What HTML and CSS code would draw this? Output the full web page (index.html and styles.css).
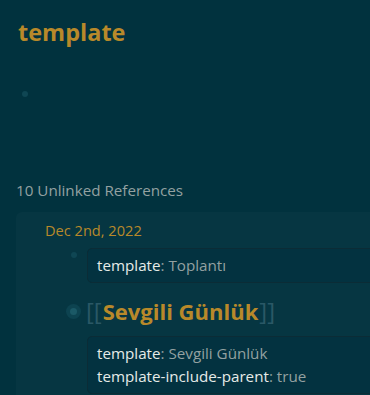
FILE: index.html
```html
<!DOCTYPE html>
<html>
<head>
<meta charset="utf-8">
<link rel="stylesheet" href="styles.css">
</head>
<body>
<div class="page">
  <h1 class="title">template</h1>
  <div class="empty-block"><span class="dot"></span></div>
  <div class="refs-head">10 Unlinked References</div>
  <div class="card">
    <div class="date">Dec 2nd, 2022</div>
    <div class="block">
      <span class="dot small"></span>
      <div class="props">
        <div class="prop"><span class="k">template</span>: <span class="v">Toplantı</span></div>
      </div>
    </div>
    <div class="block page-ref">
      <span class="ring"><span class="dot"></span></span>
      <span class="br">[[</span><span class="ref">Sevgili Günlük</span><span class="br">]]</span>
    </div>
    <div class="block nested">
      <div class="props">
        <div class="prop"><span class="k">template</span>: <span class="v">Sevgili Günlük</span></div>
        <div class="prop"><span class="k">template-include-parent</span>: <span class="v">true</span></div>
      </div>
    </div>
  </div>
</div>
</body>
</html>
```
FILE: styles.css
```css
html, body {
  margin: 0;
  padding: 0;
  background: #01323e;
  overflow: hidden;
}
.page {
  font-family: "Open Sans", "Noto Sans", sans-serif;
  color: #93a1a1;
  padding: 0 0 0 16px;
  height: 395px;
  overflow: hidden;
}
.title {
  margin: 0;
  padding: 17px 0 0 2px;
  font-size: 23.5px;
  font-weight: 700;
  line-height: 30px;
  color: #b8892a;
}
.empty-block {
  height: 26px;
  margin-top: 34px;
  display: flex;
  align-items: center;
  padding-left: 6px;
}
.dot {
  display: block;
  width: 6px;
  height: 6px;
  border-radius: 50%;
  background: #0f4653;
}
.refs-head {
  margin-top: 73px;
  font-size: 15.2px;
  line-height: 20px;
  color: #93a1a1;
}
.card {
  margin-top: 12px;
  background: #063642;
  border-radius: 6px 0 0 0;
  padding: 7px 0 0 29px;
  height: 177px;
  overflow: hidden;
}
.date {
  font-size: 14.6px;
  line-height: 22px;
  color: #b8892a;
}
.block {
  display: flex;
  align-items: flex-start;
  margin-left: 25px;
}
.block .dot.small {
  width: 6px;
  height: 6px;
  margin: 11px 10px 0 1px;
}
.props {
  flex: 1;
  background: #033240;
  border: 1px solid #0b2c36;
  border-radius: 5px;
  padding: 5px 9px;
  margin-top: 7px;
  margin-right: -10px;
}
.prop {
  font-size: 15.2px;
  line-height: 23px;
  white-space: nowrap;
}
.k {
  color: #e6ebe8;
}
.v {
  color: #93a1a1;
}
.page-ref {
  margin-top: 14px;
  align-items: center;
  font-size: 22px;
  line-height: 28px;
  margin-left: 21px;
}
.ring {
  width: 15px;
  height: 15px;
  border-radius: 50%;
  background: #0d4350;
  display: flex;
  align-items: center;
  justify-content: center;
  margin-right: 5px;
}
.ring .dot {
  width: 7px;
  height: 7px;
  background: #1b5966;
}
.br {
  color: #2a5866;
  font-size: 24px;
}
.ref {
  color: #b8892a;
  font-weight: 700;
  padding: 0 1px;
}
.nested {
  margin-left: 42px;
  margin-top: 4px;
}
```
